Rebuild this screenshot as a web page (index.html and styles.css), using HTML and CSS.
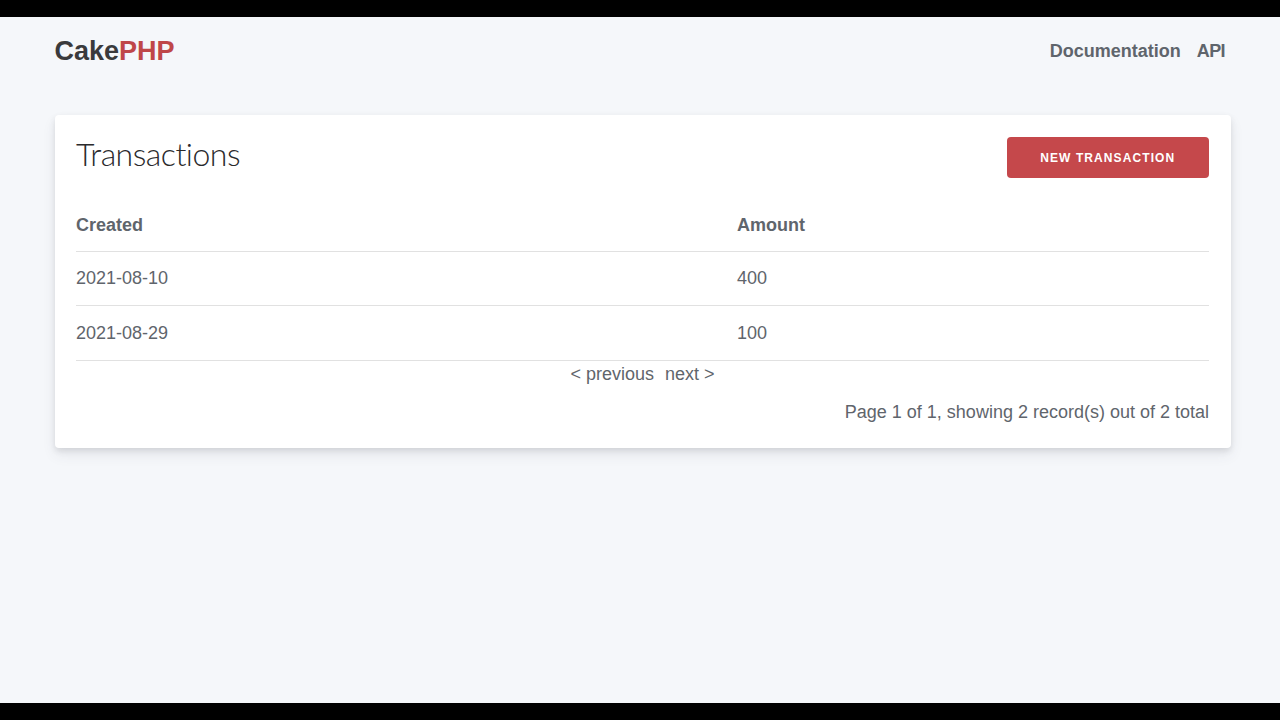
FILE: index.html
```html
<!DOCTYPE html>
<html lang="en">
<head>
    <meta charset="UTF-8">
    <title>Transactions</title>
    <link rel="stylesheet" href="styles.css">
</head>
<body>
    <div class="page">
        <nav class="top-nav">
            <a class="brand" href="#"><span>Cake</span><span class="brand-php">PHP</span></a>
            <div class="top-links">
                <a href="#">Documentation</a>
                <a class="api-link" href="#">API</a>
            </div>
        </nav>
        <main class="card">
            <div class="card-head">
                <h3>Transactions</h3>
                <a class="button" href="#">New Transaction</a>
            </div>
            <table>
                <thead>
                    <tr>
                        <th class="col-created">Created</th>
                        <th>Amount</th>
                    </tr>
                </thead>
                <tbody>
                    <tr>
                        <td>2021-08-10</td>
                        <td>400</td>
                    </tr>
                    <tr>
                        <td>2021-08-29</td>
                        <td>100</td>
                    </tr>
                </tbody>
            </table>
            <div class="paginator">
                <ul class="pagination">
                    <li><a href="#">&lt; previous</a></li>
                    <li><a href="#">next &gt;</a></li>
                </ul>
                <p>Page 1 of 1, showing 2 record(s) out of 2 total</p>
            </div>
        </main>
    </div>
</body>
</html>
```

FILE: styles.css
```css
*{
    box-sizing: border-box;
}
html, body{
    height: 100%;
}
body{
    margin: 0;
    padding: 17px 0;
    background: #000;
    font-family: "Liberation Sans", Arial, sans-serif;
    color: #5f656c;
}
a{
    color: inherit;
    text-decoration: none;
}
.page{
    height: 100%;
    padding: 0 49px 0 54.5px;
    background: #f5f7fa;
}
.top-nav{
    display: flex;
    justify-content: space-between;
    align-items: center;
    height: 68px;
    padding-right: 6px;
}
.brand{
    font-size: 27px;
    font-weight: 700;
    color: #3a3a3c;
}
.brand-php{
    color: #bf4749;
}
.top-links{
    display: flex;
    gap: 16px;
    font-size: 18px;
    font-weight: 700;
}
.api-link{
    letter-spacing: -0.6px;
}
.card{
    margin-top: 30px;
    height: 333px;
    padding: 22px 22px 0 21.5px;
    background: #fff;
    border-radius: 4px;
    box-shadow: 0 7px 14px rgba(60, 66, 87, 0.08), 0 3px 6px rgba(0, 0, 0, 0.1);
}
.card-head{
    display: flex;
    justify-content: space-between;
    align-items: flex-start;
    height: 67px;
}
h3{
    margin: 0;
    font-family: Lato, "Liberation Sans", sans-serif;
    font-size: 32px;
    font-weight: 300;
    line-height: 34px;
    letter-spacing: -0.5px;
    color: #2a2a2c;
}
.button{
    width: 202.5px;
    height: 41px;
    line-height: 43px;
    text-align: center;
    border-radius: 4px;
    background: #c5484b;
    color: #fff;
    font-size: 12px;
    font-weight: 700;
    letter-spacing: 1.1px;
    text-transform: uppercase;
}
table{
    width: 100%;
    border-collapse: collapse;
    font-size: 18px;
}
th, td{
    height: 54.5px;
    padding: 0;
    text-align: left;
    border-bottom: 1px solid #e1e1e1;
}
th{
    height: 47px;
    padding-bottom: 4px;
    font-weight: 700;
}
tr + tr td{
    padding-top: 1px;
}
.col-created{
    width: 661px;
}
.paginator{
    font-size: 18px;
}
.pagination{
    display: flex;
    justify-content: center;
    gap: 11px;
    margin: 0;
    padding: 3px 0 0;
    height: 38px;
    list-style: none;
    line-height: 21px;
}
.paginator p{
    margin: 0;
    padding-top: 3px;
    line-height: 21px;
    text-align: right;
}
```
